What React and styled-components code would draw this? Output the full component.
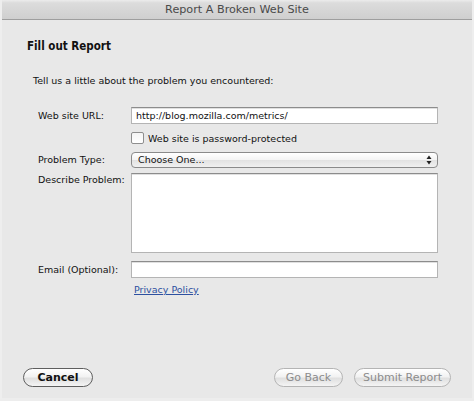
import React from "react";
import styled, { createGlobalStyle } from "styled-components";

const Global = createGlobalStyle`
  html, body { margin: 0; padding: 0; background: #e8e8e8; }
  body { font-family: "DejaVu Sans", "Liberation Sans", sans-serif; }
`;

const Window = styled.div`
  width: 474px;
  height: 401px;
  box-sizing: border-box;
  background: #e8e8e8;
  display: flex;
  flex-direction: column;
  border-left: 2px solid #eeeeee;
  border-right: 2px solid #eeeeee;
  border-bottom: 3px solid #ededed;
  overflow: hidden;
`;

const TitleBar = styled.div`
  height: 19px;
  margin: 0 -2px;
  border-bottom: 1px solid #9e9e9e;
  background: linear-gradient(#ececec 0%, #dcdcdc 15%, #cfcfcf 100%);
  display: flex;
  align-items: center;
  justify-content: center;
  font-size: 11.2px;
  color: #4a4a4a;
  flex: none;
`;

const Body = styled.div`
  flex: 1;
  display: flex;
  flex-direction: column;
  padding: 19px 0 0 25px;
`;

const Heading = styled.div`
  font-family: "DejaVu Sans Condensed", "DejaVu Sans", sans-serif;
  font-stretch: condensed;
  font-size: 11.5px;
  font-weight: bold;
  color: #111;
  line-height: 14px;
`;

const Intro = styled.div`
  font-size: 9.5px;
  color: #111;
  margin: 22px 0 0 6px;
  line-height: 12px;
`;

const Form = styled.div`
  display: grid;
  grid-template-columns: 93px 307px;
  margin: 20px 0 0 11px;
  align-items: center;
  font-size: 9.5px;
  color: #111;
`;

const Label = styled.div`
  line-height: 12px;
  align-self: ${(p) => (p.$top ? "start" : "center")};
  margin-top: ${(p) => p.$mt || 0}px;
`;

const TextInput = styled.div`
  box-sizing: border-box;
  height: ${(p) => p.$h || 17}px;
  background: #fff;
  border: 1px solid #b4b4b4;
  border-top-color: #8c8c8c;
  box-shadow: inset 0 1px 0 #e0e0e0;
  padding: 2px 0 0 4px;
  line-height: 12px;
  font-size: 9.5px;
  margin-top: ${(p) => p.$mt || 0}px;
`;

const CheckRow = styled.div`
  grid-column: 2;
  display: flex;
  align-items: center;
  gap: 4px;
  margin-top: 8px;
  height: 12px;
`;

const CheckBox = styled.div`
  width: 13px;
  height: 12px;
  box-sizing: border-box;
  border: 1px solid #8e8e8e;
  border-radius: 2px;
  background: linear-gradient(#f4f4f4, #ffffff);
`;

const Select = styled.div`
  box-sizing: border-box;
  height: 16px;
  margin-top: 8px;
  border: 1px solid #8a8a8a;
  border-radius: 4px;
  background: linear-gradient(#ffffff 0%, #f3f3f3 50%, #e2e2e2 51%, #f0f0f0 100%);
  display: flex;
  align-items: center;
  justify-content: space-between;
  padding: 0 5px 0 6px;
  line-height: 12px;
`;

const Arrows = styled.svg`
  width: 6px;
  height: 10px;
  display: block;
`;

const LinkRow = styled.div`
  grid-column: 2;
  margin: 6px 0 0 3px;
  line-height: 12px;
`;

const Link = styled.a`
  color: #2d50a0;
  text-decoration: underline;
  font-size: 9.5px;
`;

const Footer = styled.div`
  margin-top: auto;
  display: flex;
  align-items: center;
  padding: 0 21px 11px 21px;
  margin-left: -25px;
  gap: 11px;
`;

const Button = styled.div`
  box-sizing: border-box;
  height: 19px;
  width: ${(p) => p.$w}px;
  border-radius: 10px;
  border: 1px solid ${(p) => (p.$disabled ? "#b4b4b4" : "#5e5e5e")};
  background: linear-gradient(#ffffff 0%, #f2f2f2 45%, #e0e0e0 55%, #f4f4f4 100%);
  display: flex;
  align-items: center;
  justify-content: center;
  font-size: 11px;
  font-weight: ${(p) => (p.$disabled ? "normal" : "bold")};
  color: ${(p) => (p.$disabled ? "#8c8c8c" : "#111")};
  ${(p) => (p.$first ? "margin-right: auto;" : "")}
`;

export default function App() {
  return (
    <>
      <Global />
      <Window>
        <TitleBar>Report A Broken Web Site</TitleBar>
        <Body>
          <Heading>Fill out Report</Heading>
          <Intro>Tell us a little about the problem you encountered:</Intro>
          <Form>
            <Label>Web site URL:</Label>
            <TextInput>http://blog.mozilla.com/metrics/</TextInput>
            <CheckRow>
              <CheckBox />
              <span>Web site is password-protected</span>
            </CheckRow>
            <Label $mt={8}>Problem Type:</Label>
            <Select>
              <span>Choose One...</span>
              <Arrows viewBox="0 0 6 10">
                <path d="M3 0.5 L5.5 4 L0.5 4 Z" fill="#222" />
                <path d="M3 9.5 L5.5 6 L0.5 6 Z" fill="#222" />
              </Arrows>
            </Select>
            <Label $top $mt={6}>Describe Problem:</Label>
            <TextInput $h={80} $mt={5} />
            <Label $mt={8}>Email (Optional):</Label>
            <TextInput $mt={8} />
            <LinkRow>
              <Link href="#">Privacy Policy</Link>
            </LinkRow>
          </Form>
          <Footer>
            <Button $w={70} $first>Cancel</Button>
            <Button $w={69} $disabled>Go Back</Button>
            <Button $w={97} $disabled>Submit Report</Button>
          </Footer>
        </Body>
      </Window>
    </>
  );
}
